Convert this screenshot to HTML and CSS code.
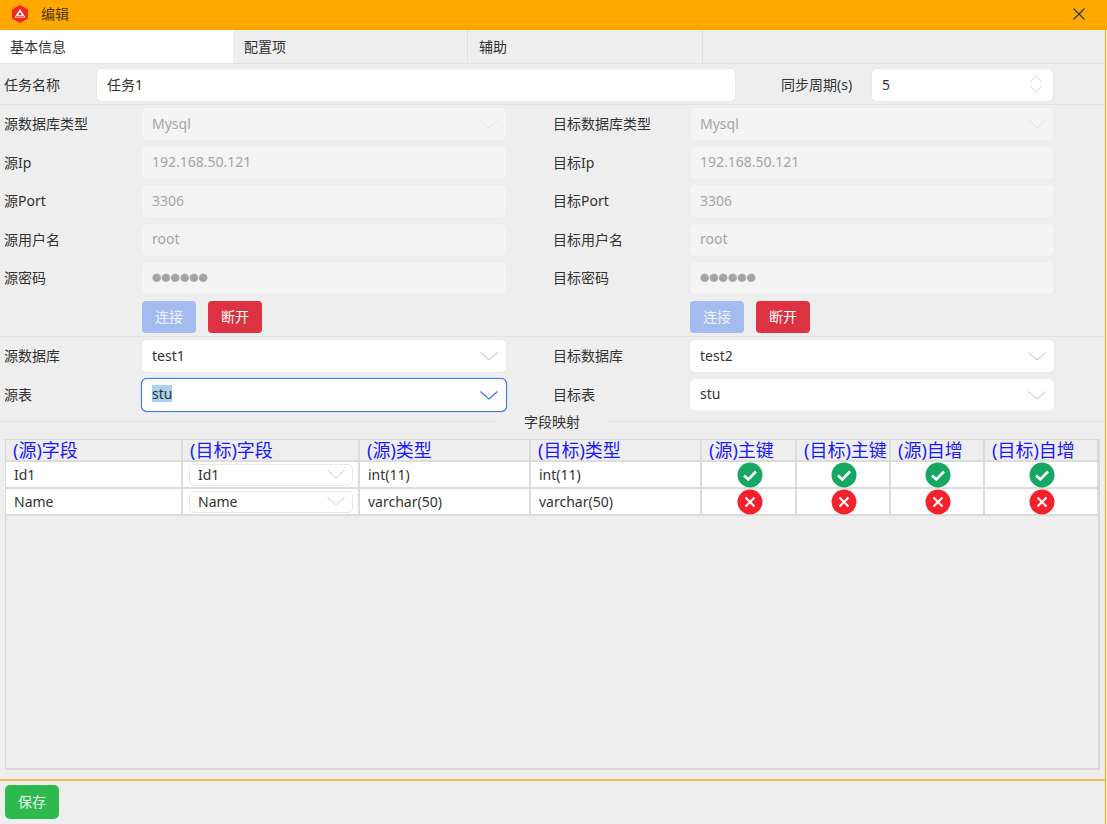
FILE: index.html
```html
<!DOCTYPE html>
<html lang="zh">
<head>
<meta charset="utf-8">
<title>编辑</title>
<link rel="stylesheet" href="styles.css">
</head>
<body>
<div class="window">
  <header class="titlebar">
    <svg class="logo" viewBox="0 0 18 18" width="18" height="18"><path d="M9 0l8 4.500v9L9 18l-8-4.500v-9z" fill="#f0281e"/><path d="M9 4l5.500 8.500h-11z" fill="#fff"/><path d="M9 7l2 3.200H7z" fill="#f0281e"/><path d="M5 11.500h8" stroke="#f0281e" stroke-width=".7"/></svg>
    <span class="title">编辑</span>
    <svg class="close" viewBox="0 0 12 12" width="12" height="12"><path d="M.5.500l11 11M11.500.500l-11 11" stroke="#333" stroke-width="1.100" fill="none"/></svg>
  </header>
  <nav class="tabs">
    <div class="tab active">基本信息</div>
    <div class="tab">配置项</div>
    <div class="tab">辅助</div>
  </nav>
  <section class="top-row">
    <label class="lbl name-lbl">任务名称</label>
    <div class="field name-field">任务1</div>
    <label class="lbl period-lbl">同步周期(s)</label>
    <div class="field period-field"><span>5</span>
      <svg viewBox="0 0 14 18" width="14" height="18"><path d="M1 7l6-6 6 6M1 11l6 6 6-6" stroke="#d8d8d8" fill="none"/></svg>
    </div>
  </section>
  <section class="form conn">
    <label class="lbl">源数据库类型</label>
    <div class="field off">Mysql<svg class="chev" viewBox="0 0 18 9" width="18" height="9"><path d="M.5.500L9 8l8.500-7.500" stroke="#e2e2e2" fill="none"/></svg></div>
    <span></span>
    <label class="lbl">目标数据库类型</label>
    <div class="field off">Mysql<svg class="chev" viewBox="0 0 18 9" width="18" height="9"><path d="M.5.500L9 8l8.500-7.500" stroke="#e2e2e2" fill="none"/></svg></div>

    <label class="lbl">源Ip</label><div class="field off">192.168.50.121</div><span></span>
    <label class="lbl">目标Ip</label><div class="field off">192.168.50.121</div>

    <label class="lbl">源Port</label><div class="field off">3306</div><span></span>
    <label class="lbl">目标Port</label><div class="field off">3306</div>

    <label class="lbl">源用户名</label><div class="field off">root</div><span></span>
    <label class="lbl">目标用户名</label><div class="field off">root</div>

    <label class="lbl">源密码</label><div class="field off dots">●●●●●●</div><span></span>
    <label class="lbl">目标密码</label><div class="field off dots">●●●●●●</div>

    <span></span><div class="btns"><button class="btn connect">连接</button><button class="btn cut">断开</button></div><span></span>
    <span></span><div class="btns"><button class="btn connect">连接</button><button class="btn cut">断开</button></div>
  </section>
  <section class="form pick">
    <label class="lbl">源数据库</label>
    <div class="field">test1<svg class="chev" viewBox="0 0 18 9" width="18" height="9"><path d="M.5.500L9 8l8.500-7.500" stroke="#bbb" fill="none"/></svg></div>
    <span></span>
    <label class="lbl">目标数据库</label>
    <div class="field">test2<svg class="chev" viewBox="0 0 18 9" width="18" height="9"><path d="M.5.500L9 8l8.500-7.500" stroke="#bbb" fill="none"/></svg></div>

    <label class="lbl">源表</label>
    <div class="field focus"><span class="sel">stu</span><svg class="chev" viewBox="0 0 18 9" width="18" height="9"><path d="M.5.500L9 8l8.500-7.500" stroke="#3d7bea" stroke-width="1.300" fill="none"/></svg></div>
    <span></span>
    <label class="lbl">目标表</label>
    <div class="field">stu<svg class="chev" viewBox="0 0 18 9" width="18" height="9"><path d="M.5.500L9 8l8.500-7.500" stroke="#bbb" fill="none"/></svg></div>
  </section>
  <div class="sep"><span>字段映射</span></div>
  <section class="grid">
    <div class="tr head">
      <div>(源)字段</div><div>(目标)字段</div><div>(源)类型</div><div>(目标)类型</div><div>(源)主键</div><div>(目标)主键</div><div>(源)自增</div><div>(目标)自增</div>
    </div>
    <div class="tr">
      <div>Id1</div>
      <div class="cellsel"><div class="mini">Id1<svg viewBox="0 0 18 9" width="18" height="9"><path d="M.5.500L9 8l8.500-7.500" stroke="#ccc" fill="none"/></svg></div></div>
      <div>int(11)</div><div>int(11)</div>
      <div class="ic"><svg viewBox="0 0 26 26" width="26" height="26"><circle cx="13" cy="13" r="12.500" fill="#16a862"/><path d="M7 13.500l4.300 4L19 9.500" stroke="#fff" stroke-width="2.600" fill="none"/></svg></div>
      <div class="ic"><svg viewBox="0 0 26 26" width="26" height="26"><circle cx="13" cy="13" r="12.500" fill="#16a862"/><path d="M7 13.500l4.300 4L19 9.500" stroke="#fff" stroke-width="2.600" fill="none"/></svg></div>
      <div class="ic"><svg viewBox="0 0 26 26" width="26" height="26"><circle cx="13" cy="13" r="12.500" fill="#16a862"/><path d="M7 13.500l4.300 4L19 9.500" stroke="#fff" stroke-width="2.600" fill="none"/></svg></div>
      <div class="ic"><svg viewBox="0 0 26 26" width="26" height="26"><circle cx="13" cy="13" r="12.500" fill="#16a862"/><path d="M7 13.500l4.300 4L19 9.500" stroke="#fff" stroke-width="2.600" fill="none"/></svg></div>
    </div>
    <div class="tr">
      <div>Name</div>
      <div class="cellsel"><div class="mini">Name<svg viewBox="0 0 18 9" width="18" height="9"><path d="M.5.500L9 8l8.500-7.500" stroke="#ccc" fill="none"/></svg></div></div>
      <div>varchar(50)</div><div>varchar(50)</div>
      <div class="ic"><svg viewBox="0 0 26 26" width="26" height="26"><circle cx="13" cy="13" r="12.500" fill="#f5222d"/><path d="M8.500 8.500l9 9M17.500 8.500l-9 9" stroke="#fff" stroke-width="2" fill="none"/></svg></div>
      <div class="ic"><svg viewBox="0 0 26 26" width="26" height="26"><circle cx="13" cy="13" r="12.500" fill="#f5222d"/><path d="M8.500 8.500l9 9M17.500 8.500l-9 9" stroke="#fff" stroke-width="2" fill="none"/></svg></div>
      <div class="ic"><svg viewBox="0 0 26 26" width="26" height="26"><circle cx="13" cy="13" r="12.500" fill="#f5222d"/><path d="M8.500 8.500l9 9M17.500 8.500l-9 9" stroke="#fff" stroke-width="2" fill="none"/></svg></div>
      <div class="ic"><svg viewBox="0 0 26 26" width="26" height="26"><circle cx="13" cy="13" r="12.500" fill="#f5222d"/><path d="M8.500 8.500l9 9M17.500 8.500l-9 9" stroke="#fff" stroke-width="2" fill="none"/></svg></div>
    </div>
  </section>
  <footer class="foot"><button class="btn save">保存</button></footer>
</div>
</body>
</html>
```
FILE: styles.css
```css
* { box-sizing: border-box; }
html, body { margin: 0; height: 100%; overflow: hidden; }
body { background: #eee; font-family: "Noto Sans", "Noto Sans CJK SC", sans-serif; font-size: 14px; color: #333; }
.window { width: 1106px; height: 824px; display: flex; flex-direction: column; background: #eee; border-right: 1px solid #ffa800; }

.titlebar { height: 30px; margin-right: -2px; background: #ffa800; display: flex; align-items: center; padding: 0 22px 2px 11px; flex: none; }
.logo { margin-right: 12px; }
.title { flex: 1; color: #4a3a10; line-height: 1; }

.tabs { height: 34px; flex: none; display: flex; border-bottom: 1px solid #e3e3e3; }
.tab { width: 235px; padding: 0 0 0 11px; line-height: 33px; border-right: 1px solid #e0e0e0; }
.tab.active { width: 233px; padding-left: 10px; background: #fff; border-right: 0; }

.top-row { height: 41px; flex: none; display: flex; align-items: flex-start; padding: 5px 0 0 4px; border-bottom: 1px solid #e3e3e3; }
.top-row .lbl { height: 32px; }
.name-lbl { width: 93px; }
.name-field { width: 638px; padding-left: 9px; }
.period-lbl { width: 91px; margin-left: 46px; }
.period-field { width: 181px; justify-content: space-between; padding-left: 9px; }

.lbl { display: flex; align-items: center; white-space: nowrap; padding-bottom: 2px; }
.field { height: 32px; background: #fff; border-radius: 5px; padding: 0 10px 2px 10px; display: flex; align-items: center; position: relative; box-shadow: 0 0 0 1px #e9e9e9; }
.field .chev { position: absolute; right: 8px; top: 12px; }
.off { background: #f4f4f4; color: #a5a5a5; box-shadow: 0 0 0 1px #ededed; }
.dots { font-size: 9.300px; }
.focus { box-shadow: 0 0 0 1px #3d7bea, 0 0 1px 1px #3d7bea; }
.sel { background: #a8d1f0; line-height: 17px; }

.form { flex: none; display: grid; grid-template-columns: 138px 364px 47px 137px 364px; padding-left: 4px; align-items: center; }
.conn { row-gap: 6.600px; grid-auto-rows: 32px; padding-top: 3px; height: 232px; border-bottom: 1px solid #e3e3e3; }
.pick { row-gap: 6.600px; grid-auto-rows: 32px; padding-top: 3px; height: 74px; position: relative; z-index: 1; }

.btns { display: flex; gap: 12px; }
.btn { height: 32px; width: 54px; border: 0; border-radius: 4px; font: inherit; color: #fff; padding: 0 0 2px; }
.connect { background: #a4bbf0; color: #eef2fd; }
.cut { background: #dc3242; }

.sep { height: 28px; flex: none; position: relative; display: flex; justify-content: center; }
.sep::before { content: ""; position: absolute; left: 0; right: 0; top: 10px; border-top: 1px solid #e3e3e3; }
.sep span { position: relative; background: #eee; padding: 0 28px; line-height: 22px; height: 22px; margin-left: -1px; }

.grid { flex: 1; margin: 0 5px; border: 1px solid #d9d9d9; border-width: 1px 2px 2px 1px; min-height: 0; }
.tr { display: grid; grid-template-columns: 177px 177px 171px 171px 95px 94px 94px 114px; height: 27px; background: #fff; border-bottom: 2px solid #dcdcdc; }
.tr > div { border-right: 2px solid #dcdcdc; padding: 0 0 2px 8px; display: flex; align-items: center; white-space: nowrap; min-width: 0; }
.tr.head { height: 22px; background: #eee; color: #1a1aff; font-size: 18px; line-height: 20px; }
.tr.head > div { padding: 0 0 0 7px; }
.tr > .cellsel { padding: 0 5px 0 6px; }
.mini { width: 100%; height: 22px; border: 1px solid #e8e8e8; border-radius: 5px; padding: 0 7px 1px 8px; display: flex; align-items: center; justify-content: space-between; }
.tr > .ic { padding: 0 0 0 2px; justify-content: center; }

.foot { height: 45px; flex: none; margin-top: 9px; border-top: 2px solid #f9bd55; padding: 4px 0 0 5px; }
.save { background: #2eb94f; height: 34px; border-radius: 5px; color: #e8f8ec; }
```
